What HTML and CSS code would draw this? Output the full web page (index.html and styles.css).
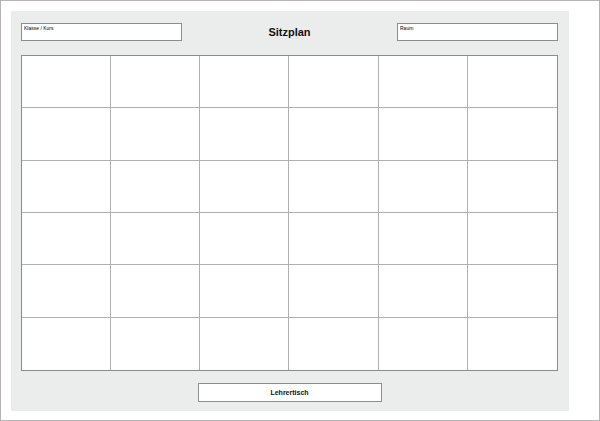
FILE: index.html
```html
<!DOCTYPE html>
<html lang="de">
<head>
    <meta charset="UTF-8">
    <meta name="viewport" content="width=device-width, initial-scale=1.0">
    <title>Sitzplan</title>
    <link rel="stylesheet" href="styles.css">
</head>
<body>
    <div id="page">
        <div id="sheet">
            <!-- Kopfzeile -->
            <div id="header">
                <div class="field"><span class="label">Klasse / Kurs</span></div>
                <h1 id="title">Sitzplan</h1>
                <div class="field"><span class="label">Raum</span></div>
            </div>

            <!-- Sitzplätze -->
            <div id="seats">
                <div class="seat"></div><div class="seat"></div><div class="seat"></div><div class="seat"></div><div class="seat"></div><div class="seat"></div>
                <div class="seat"></div><div class="seat"></div><div class="seat"></div><div class="seat"></div><div class="seat"></div><div class="seat"></div>
                <div class="seat"></div><div class="seat"></div><div class="seat"></div><div class="seat"></div><div class="seat"></div><div class="seat"></div>
                <div class="seat"></div><div class="seat"></div><div class="seat"></div><div class="seat"></div><div class="seat"></div><div class="seat"></div>
                <div class="seat"></div><div class="seat"></div><div class="seat"></div><div class="seat"></div><div class="seat"></div><div class="seat"></div>
                <div class="seat"></div><div class="seat"></div><div class="seat"></div><div class="seat"></div><div class="seat"></div><div class="seat"></div>
            </div>

            <!-- Lehrertisch -->
            <div id="deskRow">
                <div id="desk">Lehrertisch</div>
            </div>
        </div>
    </div>
</body>
</html>
```

FILE: styles.css
```css
    * {
        box-sizing: border-box;
    }

    body {
        font-family: "Liberation Sans", Arial, sans-serif;
        margin: 0;
        padding: 0;
        background-color: white;
        color: #111;
    }

    #page {
        width: 600px;
        height: 421px;
        border: 1px solid #b4b4b4;
        background-color: white;
        padding: 10px 30px 10px 10px;
    }

    #sheet {
        width: 558px;
        height: 400px;
        background-color: #ebecec;
        padding: 12px 11px 9px 10px;
        display: flex;
        flex-direction: column;
    }

    /* Kopfzeile */
    #header {
        display: grid;
        grid-template-columns: 161px 1fr 161px;
        height: 18px;
        margin-bottom: 14px;
    }

    .field {
        background-color: white;
        border: 1px solid #8c8c8c;
        padding: 2px 2px;
    }

    .label {
        display: block;
        font-size: 5px;
        line-height: 5px;
        color: #000;
    }

    #title {
        margin: 0;
        font-size: 11px;
        font-weight: bold;
        text-align: center;
        line-height: 18px;
        color: #111;
    }

    /* Sitzplätze */
    #seats {
        display: grid;
        grid-template-columns: repeat(6, 1fr);
        grid-template-rows: repeat(6, 1fr);
        height: 317px;
        border: 1px solid #8c8c8c;
        background-color: white;
    }

    .seat {
        border-right: 1px solid #b0b0b0;
        border-bottom: 1px solid #b0b0b0;
    }

    .seat:nth-child(6n) {
        border-right: none;
    }

    .seat:nth-child(n+31) {
        border-bottom: none;
    }

    /* Lehrertisch */
    #deskRow {
        display: flex;
        justify-content: center;
        margin-top: 12px;
    }

    #desk {
        width: 184px;
        height: 19px;
        background-color: white;
        border: 1px solid #8c8c8c;
        font-size: 7px;
        font-weight: bold;
        line-height: 17px;
        text-align: center;
    }
```
